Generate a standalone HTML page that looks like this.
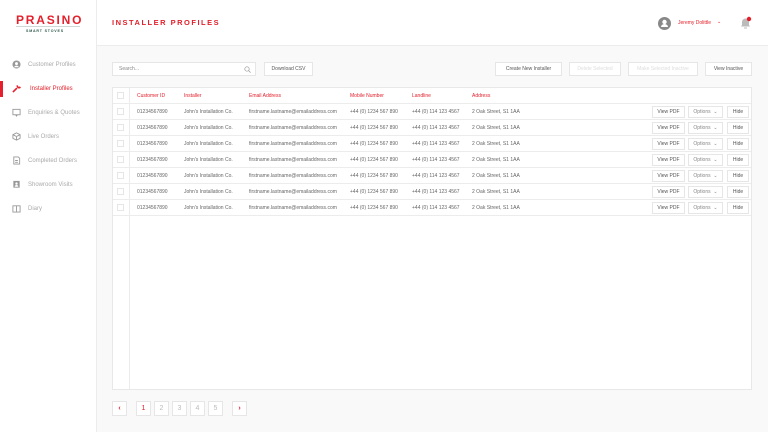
<!DOCTYPE html>
<html><head><meta charset="utf-8"><style>
*{box-sizing:border-box;margin:0;padding:0}
body{width:768px;height:432px;overflow:hidden;font-family:"Liberation Sans",sans-serif;background:#f9f9f9;position:relative;color:#666;font-size:5px}
.abs{position:absolute}
#side{left:0;top:0;width:97px;height:432px;background:#fff;border-right:1px solid #ececec}
#head{left:97px;top:0;width:671px;height:46px;background:#fff;border-bottom:1px solid #ececec}
.logo{left:16px;top:13px;font-size:12px;font-weight:bold;color:#e3202b;letter-spacing:1.8px}
.logoline{left:16px;top:26px;width:64px;height:1px;background:#cfd8d2}
.logosub{left:26px;top:29px;font-size:3.6px;font-weight:bold;color:#2b5a47;letter-spacing:0.8px}
.nav{left:28px;font-size:6px;color:#aaa}
.ico{left:12px;width:9px;height:9px}
.btn{background:#fff;border:1px solid #e6e6e6;font-size:5px;color:#555;display:flex;align-items:center;justify-content:center}
.dis{color:#ddd}
#tbl{left:112px;top:87px;width:640px;height:303px;background:#fff;border:1px solid #e8e8e8}
.row{position:absolute;left:0;width:638px;height:16px;border-bottom:1px solid #ececec}
.c{position:absolute;top:5px;font-size:5px;color:#666;white-space:nowrap}
.h .c{color:#e3202b}
.cb{position:absolute;left:4px;top:4px;width:7px;height:7px;border:1px solid #e6e6e6;background:#fff}
.rb{position:absolute;top:2px;height:12px}
.pg{top:401px;width:15px;height:15px;font-size:7px;color:#bbb}
</style></head><body>
<div id="side" class="abs">
<div class="abs logo">PRASINO</div>
<div class="abs logoline"></div>
<div class="abs logosub">SMART STOVES</div>
<div class="abs" style="left:0;top:81px;width:3px;height:16px;background:#e3202b"></div>
<svg class="abs ico" style="top:60px" viewBox="0 0 10 10"><circle cx="5" cy="5" r="4.5" fill="#999"/><circle cx="5" cy="4" r="1.6" fill="#fff"/><path d="M2.3 8a3 3 0 0 1 5.4 0" fill="#fff"/></svg>
<div class="abs nav" style="top:62px">Customer Profiles</div>
<svg class="abs ico" style="top:84px" viewBox="0 0 10 10"><path d="M1 9l4.5-4.5M6 1.5a2 2 0 0 0 2.5 2.5l.8-.8" stroke="#e3202b" stroke-width="1.8" fill="none"/></svg>
<div class="abs nav" style="top:86px;left:30px;color:#e3202b">Installer Profiles</div>
<svg class="abs ico" style="top:108px" viewBox="0 0 10 10"><rect x="1" y="1.5" width="8" height="6" fill="none" stroke="#999"/><path d="M4 7.5l1 1.5 1-1.5" stroke="#999" fill="none"/></svg>
<div class="abs nav" style="top:110px">Enquiries &amp; Quotes</div>
<svg class="abs ico" style="top:132px" viewBox="0 0 10 10"><path d="M5 1l4 2v4l-4 2-4-2V3z M1 3l4 2 4-2M5 5v4" stroke="#999" fill="none"/></svg>
<div class="abs nav" style="top:134px">Live Orders</div>
<svg class="abs ico" style="top:156px" viewBox="0 0 10 10"><path d="M2 1h5l1.5 1.5V9H2z M3.5 5h3M3.5 7h3" stroke="#999" fill="none"/></svg>
<div class="abs nav" style="top:158px">Completed Orders</div>
<svg class="abs ico" style="top:180px" viewBox="0 0 10 10"><rect x="1.5" y="1" width="7" height="7.5" fill="#999"/><circle cx="5" cy="4" r="1.3" fill="#fff"/><path d="M3 7.5a2 2 0 0 1 4 0" fill="#fff"/></svg>
<div class="abs nav" style="top:182px">Showroom Visits</div>
<svg class="abs ico" style="top:204px" viewBox="0 0 10 10"><path d="M1 2h8v7H1z M5 2v7" stroke="#999" fill="none"/></svg>
<div class="abs nav" style="top:206px">Diary</div>
</div>
<div id="head" class="abs">
<div class="abs" style="left:15px;top:18px;font-size:7.5px;font-weight:bold;color:#e3202b;letter-spacing:1.5px">INSTALLER PROFILES</div>
<svg class="abs" style="left:561px;top:17px" width="13" height="13" viewBox="0 0 13 13"><circle cx="6.5" cy="6.5" r="6.5" fill="#888"/><circle cx="6.5" cy="5" r="2.2" fill="#fff"/><path d="M3 10a3.5 3 0 0 1 7 0z" fill="#fff"/></svg>
<div class="abs" style="left:581px;top:20px;font-size:5px;color:#e3202b">Jeremy Dolittle</div>
<div class="abs" style="left:620px;top:19px;font-size:5px;color:#e3202b">⌄</div>
<svg class="abs" style="left:642px;top:16px" width="13" height="14" viewBox="0 0 13 14"><path d="M2 10.5h9l-1-1.5V6a3.5 3.5 0 0 0-7 0v3z" fill="#bbb"/><rect x="5" y="11.5" width="3" height="1" fill="#bbb"/><circle cx="10" cy="3" r="2.2" fill="#e3202b"/></svg>
</div>
<div class="abs btn" style="left:112px;top:62px;width:144px;height:14px;justify-content:flex-start;padding-left:6px;color:#888">Search...</div>
<svg class="abs" style="left:244px;top:66px" width="7" height="7" viewBox="0 0 7 7"><circle cx="3" cy="3" r="2.2" stroke="#999" fill="none" stroke-width=".7"/><path d="M4.6 4.6l2 2" stroke="#999" stroke-width=".7"/></svg>
<div class="abs btn" style="left:264px;top:62px;width:49px;height:14px">Download CSV</div>
<div class="abs btn" style="left:495px;top:62px;width:67px;height:14px">Create New Installer</div>
<div class="abs btn dis" style="left:569px;top:62px;width:52px;height:14px">Delete Selected</div>
<div class="abs btn dis" style="left:628px;top:62px;width:70px;height:14px">Make Selected Inactive</div>
<div class="abs btn" style="left:705px;top:62px;width:47px;height:14px">View Inactive</div>
<div id="tbl" class="abs">
<div class="abs" style="left:16px;top:0;width:1px;height:301px;background:#ececec"></div>
<div class="row h" style="top:0"><div class="cb"></div><div class="c" style="left:24px">Customer ID</div><div class="c" style="left:71px">Installer</div><div class="c" style="left:136px">Email Address</div><div class="c" style="left:237px">Mobile Number</div><div class="c" style="left:299px">Landline</div><div class="c" style="left:359px">Address</div></div>
<div id="rows"></div>
</div>
<div class="abs btn pg" style="left:112px;color:#e3202b;font-weight:bold">‹</div>
<div class="abs btn pg" style="left:136px;color:#e3202b">1</div>
<div class="abs btn pg" style="left:154px">2</div>
<div class="abs btn pg" style="left:172px">3</div>
<div class="abs btn pg" style="left:190px">4</div>
<div class="abs btn pg" style="left:208px">5</div>
<div class="abs btn pg" style="left:232px;color:#e3202b;font-weight:bold">›</div>
<script>
var h='';for(var i=0;i<7;i++){h+='<div class="row" style="top:'+(16+i*16)+'px"><div class="cb"></div><div class="c" style="left:24px">01234567890</div><div class="c" style="left:71px">John\'s Installation Co.</div><div class="c" style="left:136px">firstname.lastname@emailaddress.com</div><div class="c" style="left:237px">+44 (0) 1234 567 890</div><div class="c" style="left:299px">+44 (0) 114 123 4567</div><div class="c" style="left:359px">2 Oak Street, S1 1AA</div><div class="btn rb" style="left:539px;width:33px">View PDF</div><div class="btn rb" style="left:575px;width:35px;color:#888">Options &nbsp;⌄</div><div class="btn rb" style="left:614px;width:22px">Hide</div></div>'}
document.getElementById('rows').innerHTML=h;
</script>
</body></html>
